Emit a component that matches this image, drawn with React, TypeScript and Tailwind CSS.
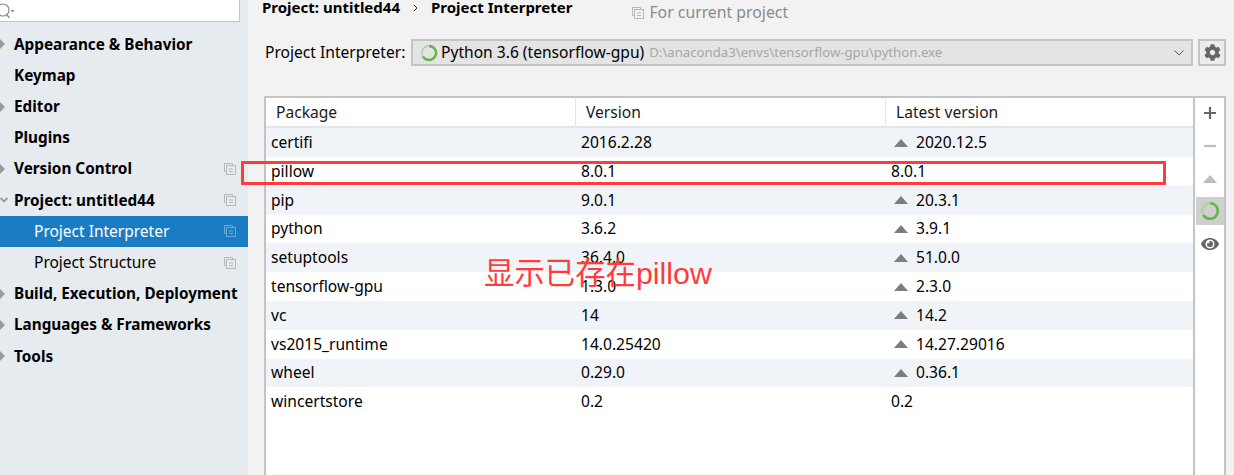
import { FaCog, FaEye } from "react-icons/fa";

const font = "font-['Noto_Sans','Noto_Sans_CJK_SC',sans-serif]";

function CopyIcon({ className = "text-[#b4b9bd]" }: { className?: string }) {
  return (
    <svg width="12" height="12" viewBox="0 0 12 12" fill="none" stroke="currentColor" className={`shrink-0 ${className}`}>
      <path d="M8.5 2.5V.5H.5v8h2" />
      <rect x="2.5" y="2.5" width="9" height="9" />
      <path d="M5 6h4M5 8.5h4" />
    </svg>
  );
}

function Arrow({ open }: { open?: boolean }) {
  return open ? (
    <svg width="8" height="6" viewBox="0 0 8 6" className="shrink-0">
      <path d="M0.5 1 4 4.5 7.5 1" fill="none" stroke="#9a9a9a" strokeWidth="1.8" />
    </svg>
  ) : (
    <svg width="5" height="10" viewBox="0 0 5 10" className="shrink-0">
      <path d="M0 0 5 5 0 10Z" fill="#9a9a9a" />
    </svg>
  );
}

function Spinner({ size = 18 }: { size?: number }) {
  return (
    <svg width={size} height={size} viewBox="0 0 18 18" className="shrink-0">
      <circle cx="9" cy="9" r="7" fill="none" stroke="#9ccf8e" strokeWidth="2.2" strokeDasharray="1.5 1" />
      <path d="M9 2a7 7 0 1 1-6 10.6" fill="none" stroke="#62b84a" strokeWidth="2.4" />
    </svg>
  );
}

function Up({ color = "#7d7d7d" }: { color?: string }) {
  return (
    <svg width="14" height="8" viewBox="0 0 14 8" className="shrink-0">
      <path d="M7 0 14 8H0Z" fill={color} />
    </svg>
  );
}

const navItems = [
  { label: "Appearance & Behavior", arrow: true },
  { label: "Keymap" },
  { label: "Editor", arrow: true },
  { label: "Plugins" },
  { label: "Version Control", arrow: true, copy: true },
  { label: "Project: untitled44", open: true, copy: true },
  { label: "Project Interpreter", child: true, selected: true, copy: true },
  { label: "Project Structure", child: true, copy: true },
  { label: "Build, Execution, Deployment", arrow: true },
  { label: "Languages & Frameworks", arrow: true },
  { label: "Tools", arrow: true },
];

const packages = [
  { name: "certifi", version: "2016.2.28", latest: "2020.12.5", up: true },
  { name: "pillow", version: "8.0.1", latest: "8.0.1" },
  { name: "pip", version: "9.0.1", latest: "20.3.1", up: true },
  { name: "python", version: "3.6.2", latest: "3.9.1", up: true },
  { name: "setuptools", version: "36.4.0", latest: "51.0.0", up: true },
  { name: "tensorflow-gpu", version: "1.3.0", latest: "2.3.0", up: true },
  { name: "vc", version: "14", latest: "14.2", up: true },
  { name: "vs2015_runtime", version: "14.0.25420", latest: "14.27.29016", up: true },
  { name: "wheel", version: "0.29.0", latest: "0.36.1", up: true },
  { name: "wincertstore", version: "0.2", latest: "0.2" },
];

function Sidebar() {
  return (
    <div className="flex h-full w-[248px] shrink-0 flex-col bg-[#e6ebf0]">
      <div className="mr-2 flex h-[22px] items-end border-r border-b border-[#c4c4c4] bg-white pb-[2px]">
        <svg width="14" height="16" viewBox="0 0 14 16" fill="none" stroke="#8a8a8a" strokeWidth="1.2">
          <circle cx="3" cy="7" r="6" />
          <path d="M7 12l2.5 3" />
          <path d="M10.5 7h4l-2 2.5Z" fill="#8a8a8a" stroke="none" />
        </svg>
      </div>
      <div className="mt-[6.6px] flex flex-col">
        {navItems.map((item) => (
          <div
            key={item.label}
            className={`flex h-[31.2px] items-center pr-[12px] text-[15.5px] ${item.selected ? "bg-[#1a7dc4] text-white" : "text-black"}`}
          >
            <div className="flex w-[14px] shrink-0 items-center">
              {item.arrow && <Arrow />}
              {item.open && <Arrow open />}
            </div>
            <span className={`grow whitespace-nowrap ${item.child ? "pl-5 font-normal" : "text-[15.3px] font-bold"}`}>{item.label}</span>
            {item.copy && <CopyIcon className={item.selected ? "text-[#6fa8d4]" : "text-[#b4b9bd]"} />}
          </div>
        ))}
      </div>
    </div>
  );
}

function PackageRow({ pkg, index }: { pkg: (typeof packages)[number]; index: number }) {
  return (
    <div className={`flex h-[28.8px] items-center text-[15.6px] text-black ${index % 2 === 0 ? "bg-[#f0f3f8]" : "bg-white"}`}>
      <div className="w-[310px] pl-[5px]">{pkg.name}</div>
      <div className="w-[310px] pl-[5px]">{pkg.version}</div>
      <div className="flex items-center gap-[8px] pl-[8px]">
        {pkg.up ? <Up /> : null}
        <span className={pkg.up ? "" : "-ml-[3px]"}>{pkg.latest}</span>
      </div>
    </div>
  );
}

export default function App() {
  return (
    <div className={`relative flex h-[475px] w-[1234px] overflow-hidden bg-[#f2f2f2] ${font}`}>
      <Sidebar />
      <div className="flex h-full grow flex-col pr-2 pl-[17px]">
        <div className="-ml-[3px] flex h-[15px] items-center text-[15px] leading-none text-black">
          <span className="font-bold">Project: untitled44</span>
          <svg width="5" height="8" viewBox="0 0 5 8" className="mx-[13px]">
            <path d="M1 1l3 3-3 3" fill="none" stroke="#333" />
          </svg>
          <span className="font-bold">Project Interpreter</span>
          <div className="ml-[60px] flex translate-y-[5px] items-center gap-[5px] text-[15.8px] text-[#8a8a8a]">
            <CopyIcon />
            <span>For current project</span>
          </div>
        </div>

        <div className="mt-[24px] flex h-[27px] items-center gap-[5px]">
          <span className="mr-[1px] w-[140px] text-[15.6px] whitespace-nowrap text-black">Project Interpreter:</span>
          <div className="flex h-full grow items-center border-2 border-[#c4c4c4] bg-[#e4e4e4] pr-[7px] pl-[7px]">
            <Spinner />
            <span className="ml-[3px] text-[15.6px] whitespace-nowrap text-black">Python 3.6 (tensorflow-gpu)</span>
            <span className="ml-[5px] grow text-[13.2px] whitespace-nowrap text-[#a6a6a6]">D:\anaconda3\envs\tensorflow-gpu\python.exe</span>
            <svg width="10" height="6" viewBox="0 0 10 6">
              <path d="M.5.5 5 5 9.5.5" fill="none" stroke="#555" />
            </svg>
          </div>
          <div className="flex h-full w-[28px] shrink-0 items-center justify-center border-2 border-[#c4c4c4] bg-[#ececec]">
            <FaCog size={17} color="#666" />
          </div>
        </div>

        <div className="mt-[30px] -ml-[1px] flex min-h-0 grow border-t-2 border-l-2 border-[#c4c4c4] bg-white">
          <div className="min-w-0 grow border-r-2 border-[#c4c4c4]">
            <div className="flex h-[30.3px] items-center border-b-2 border-[#e6e6e6] text-[15.6px] text-[#1a1a1a]">
              <div className="h-full w-[309px] pl-[10px] leading-[28px]">Package</div>
              <div className="h-full w-[310px] border-l border-[#e6e6e6] pl-[10px] leading-[28px]">Version</div>
              <div className="h-full border-l border-[#e6e6e6] pl-[10px] leading-[28px]">Latest version</div>
            </div>
            {packages.map((pkg, i) => (
              <PackageRow key={pkg.name} pkg={pkg} index={i} />
            ))}
          </div>
          <div className="flex w-[31px] shrink-0 flex-col border-r-2 border-[#c4c4c4] pl-[1px]">
            <div className="flex h-[30.5px] items-center justify-center">
              <svg width="14" height="14" viewBox="0 0 14 14"><path d="M7 1v12M1 7h12" stroke="#666" strokeWidth="2.2" /></svg>
            </div>
            <div className="flex h-[34.5px] items-center justify-center">
              <svg width="14" height="14" viewBox="0 0 14 14"><path d="M1 7h12" stroke="#bdbdbd" strokeWidth="2.2" /></svg>
            </div>
            <div className="flex h-[31.5px] items-center justify-center">
              <Up color="#bdbdbd" />
            </div>
            <div className="flex h-[32.5px] items-center justify-center">
              <div className="flex h-[28px] w-[28px] items-center justify-center bg-[#cfcfcf]">
                <Spinner size={20} />
              </div>
            </div>
            <div className="flex h-[33.5px] items-center justify-center">
              <FaEye size={18} color="#666" />
            </div>
          </div>
        </div>
      </div>

      <div className="absolute top-[161px] left-[241px] h-[24px] w-[925px] border-[3px] border-[#ff3b3b]" />
      <div className="absolute top-[251px] left-[484px] font-['Liberation_Sans','Noto_Sans_CJK_SC',sans-serif] text-[30.4px] whitespace-nowrap text-[#ff3b3b]">
        显示已存在pillow
      </div>
    </div>
  );
}
